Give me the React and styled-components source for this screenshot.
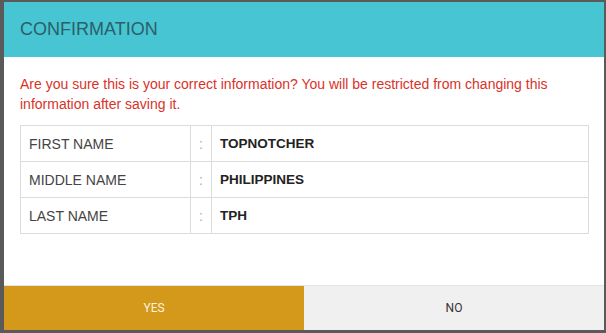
import React from "react";
import styled, { createGlobalStyle } from "styled-components";

const GlobalStyle = createGlobalStyle`
  html, body {
    margin: 0;
    padding: 0;
    background: #5a5a5a;
  }
  * {
    box-sizing: border-box;
  }
`;

const rows = [
  { label: "FIRST NAME", value: "TOPNOTCHER" },
  { label: "MIDDLE NAME", value: "PHILIPPINES" },
  { label: "LAST NAME", value: "TPH" },
];

const App = () => {
  return (
    <Backdrop>
      <GlobalStyle />
      <Modal>
        <Header>
          <Title>CONFIRMATION</Title>
        </Header>
        <Body>
          <Warning>
            Are you sure this is your correct information? You will be restricted
            from changing this information after saving it.
          </Warning>
          <InfoTable>
            <tbody>
              {rows.map((row) => (
                <tr key={row.label}>
                  <LabelCell>{row.label}</LabelCell>
                  <ColonCell>:</ColonCell>
                  <ValueCell>{row.value}</ValueCell>
                </tr>
              ))}
            </tbody>
          </InfoTable>
        </Body>
        <Footer>
          <FooterButton primary>YES</FooterButton>
          <FooterButton>NO</FooterButton>
        </Footer>
      </Modal>
    </Backdrop>
  );
};

const Backdrop = styled.div`
  width: 606px;
  height: 333px;
  padding: 2px 2px 3px 4px;
  background: #5a5a5a;
  font-family: "Liberation Sans", Arial, sans-serif;
`;

const Modal = styled.div`
  width: 600px;
  height: 328px;
  background: #fff;
  display: flex;
  flex-direction: column;
`;

const Header = styled.div`
  height: 55px;
  background: #47c5d2;
  display: flex;
  align-items: center;
  padding-left: 16px;
`;

const Title = styled.h4`
  margin: 0;
  font-size: 18px;
  font-weight: normal;
  color: #2b5f69;
`;

const Body = styled.div`
  flex: 1;
  padding: 17px 15px 0 16px;
`;

const Warning = styled.p`
  margin: 0 0 11px;
  font-size: 14px;
  line-height: 20px;
  color: #d9322a;
`;

const InfoTable = styled.table`
  width: 100%;
  border-collapse: collapse;
  font-size: 14px;

  td {
    border: 1px solid #dcdcdc;
    height: 36px;
    padding: 0 8px;
  }
`;

const LabelCell = styled.td`
  width: 170px;
  color: #444;
`;

const ColonCell = styled.td`
  width: 21px;
  color: #aaa;
  text-align: center;
`;

const ValueCell = styled.td`
  color: #222;
  font-weight: bold;
  font-size: 13.5px;
`;

const Footer = styled.div`
  display: flex;
  height: 45px;
  border-top: 1px solid #e2e2e2;
`;

const FooterButton = styled.button`
  flex: 1;
  border: none;
  margin: 0;
  font-family: Roboto, "Liberation Sans", sans-serif;
  font-size: 12px;
  background: ${(p) => (p.primary ? "#d4981a" : "#f0f0f0")};
  color: ${(p) => (p.primary ? "#fbf3dc" : "#333")};
`;

export default App;
